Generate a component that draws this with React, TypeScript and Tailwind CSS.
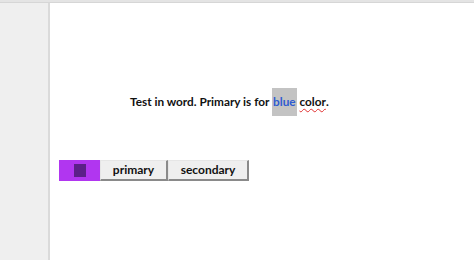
export default function App() {
  return (
    <div className="w-[474px] h-[260px] bg-white flex flex-col overflow-hidden font-['Lato',sans-serif]">
      <div className="h-[3px] bg-[#e4e4e4] border-b border-[#d6d6d6]" />
      <div className="flex flex-1">
        <div className="w-[50px] bg-[#efefef] border-r-2 border-[#dadada]" />
        <div className="flex-1 flex flex-col">
          <div className="h-[85px]" />
          <div className="flex pl-[80px] h-[28px] items-center text-[11.8px] font-bold text-[#111]">
            <span>Test in word. Primary is for&nbsp;</span>
            <span className="bg-[#c3c3c3] h-[28px] px-[1px] flex items-center text-[#2e5bd1]">blue</span>
            <span>&nbsp;</span>
            <span className="underline decoration-wavy decoration-[#e03030] decoration-1 underline-offset-2">color</span>
            <span>.</span>
          </div>
          <div className="h-[44px]" />
          <div className="flex pl-[9px] h-[21px]">
            <div className="w-[41px] h-[21px] bg-[#b136f0] flex items-center justify-center">
              <div className="w-[12px] h-[13px] bg-[#5b2088]" />
            </div>
            <button className="w-[68px] h-[21px] bg-[#efefef] border-r-2 border-b-2 border-l border-t border-l-[#e6e6e6] border-t-[#e6e6e6] border-r-[#8a8a8a] border-b-[#8a8a8a] text-[12px] font-bold text-[#111]">
              primary
            </button>
            <button className="w-[81px] h-[21px] bg-[#efefef] border-r-2 border-b-2 border-l border-t border-l-[#e6e6e6] border-t-[#e6e6e6] border-r-[#8a8a8a] border-b-[#8a8a8a] text-[12px] font-bold text-[#111]">
              secondary
            </button>
          </div>
        </div>
      </div>
    </div>
  );
}
